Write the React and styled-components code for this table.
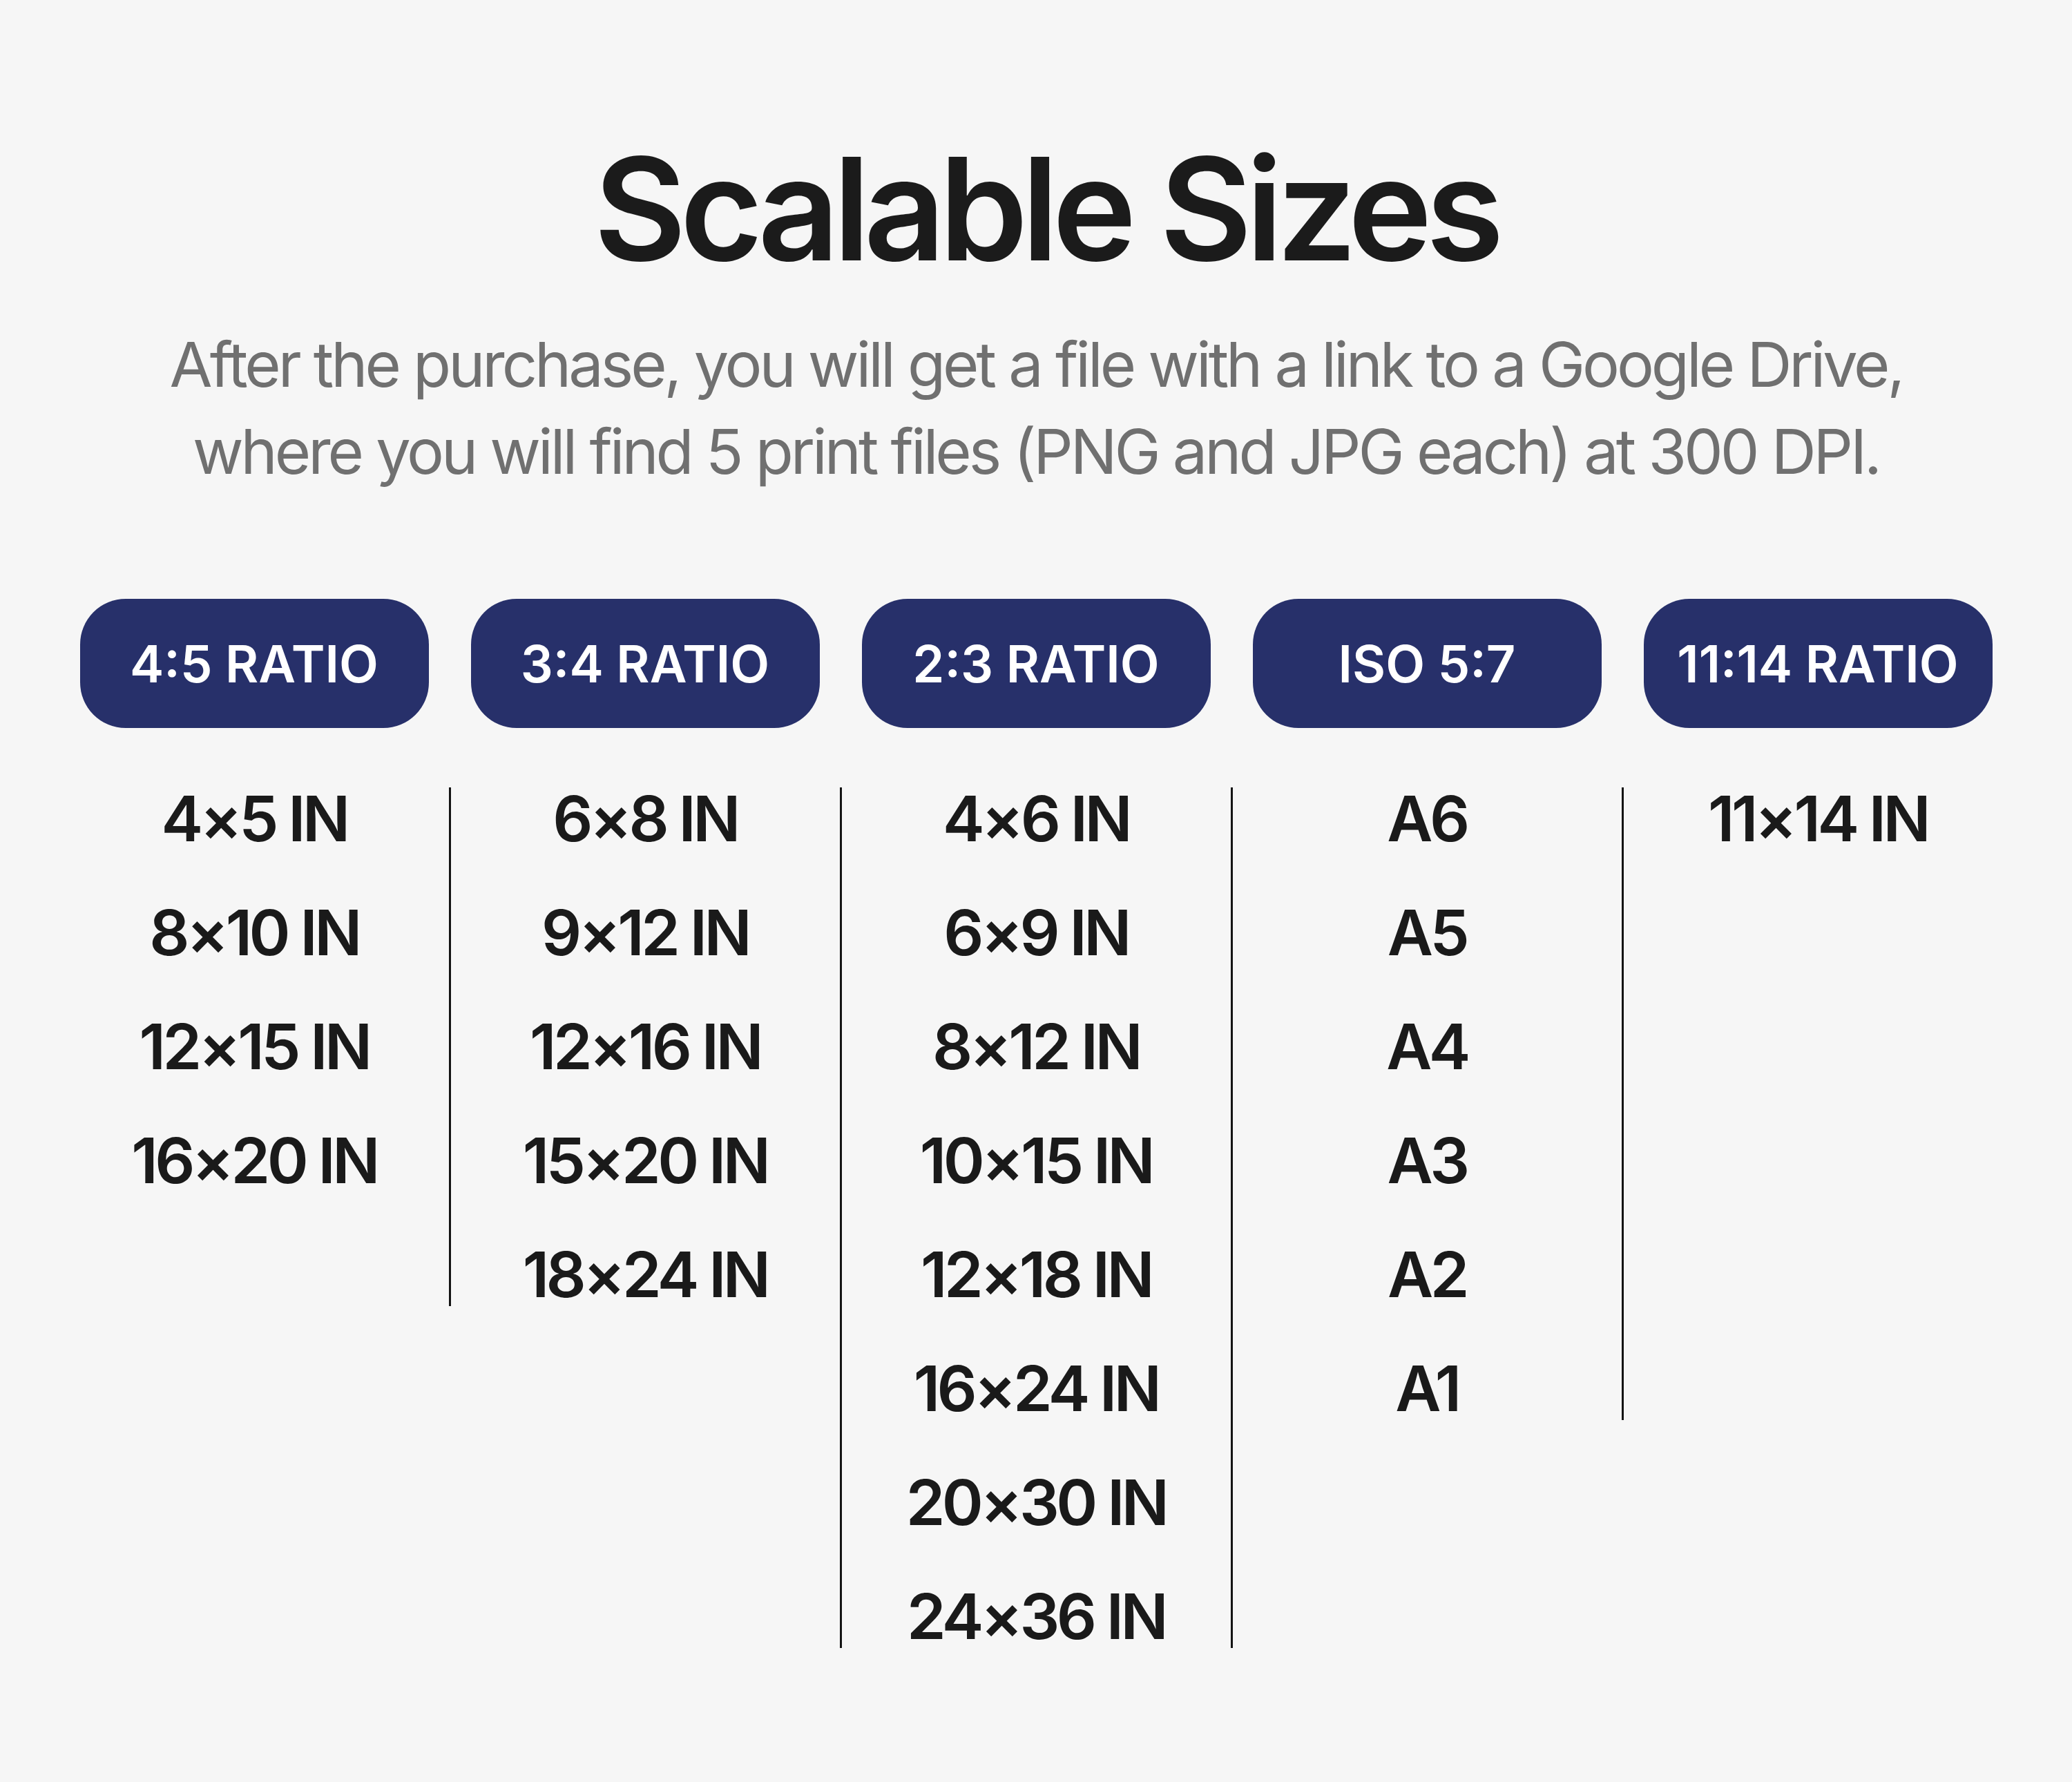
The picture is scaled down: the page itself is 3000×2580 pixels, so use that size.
import styled, { createGlobalStyle } from "styled-components";

const GlobalStyle = createGlobalStyle`
    html, body {
        margin: 0;
        padding: 0;
        background: #f6f6f6;
    }
    body {
        font-family: Inter, "Noto Sans", sans-serif;
        -webkit-font-smoothing: antialiased;
    }
`;

const Page = styled.main`
    width: 3000px;
    min-height: 2580px;
    box-sizing: border-box;
    padding-top: 199px;
    display: flex;
    flex-direction: column;
    align-items: center;
`;

const Title = styled.h1`
    margin: 0 0 0 28px;
    font-size: 206px;
    line-height: 206px;
    font-weight: 600;
    letter-spacing: -0.045em;
    color: #1b1b1b;
`;

const Subtitle = styled.p`
    margin: 60px 0 0;
    font-size: 90px;
    line-height: 126px;
    font-weight: 400;
    letter-spacing: -0.045em;
    color: #707070;
    text-align: center;
`;

const Grid = styled.section`
    margin-top: 150px;
    display: grid;
    grid-template-columns: repeat(5, 566px);
`;

const Column = styled.div`
    display: flex;
    flex-direction: column;
    align-items: stretch;
    padding: 0 30.5px;
`;

const Pill = styled.div`
    height: 187px;
    border-radius: 66px;
    background: #27306a;
    color: #ffffff;
    display: flex;
    align-items: center;
    justify-content: center;
    font-size: 74px;
    font-weight: 600;
    letter-spacing: 0;
`;

const List = styled.ul`
    list-style: none;
    margin: 86px -32px 0;
    padding: 0;
    display: flex;
    flex-direction: column;
    gap: 74px;
    border-left: 3px solid ${({ $left }) => ($left ? "#141414" : "transparent")};
    border-right: 3px solid ${({ $right }) => ($right ? "#141414" : "transparent")};
`;

const Size = styled.li`
    font-size: 91px;
    line-height: 91px;
    font-weight: 600;
    letter-spacing: -0.05em;
    color: #1a1a1a;
    text-align: center;
`;

const groups = [
    { label: "4:5 RATIO", sizes: ["4×5 IN", "8×10 IN", "12×15 IN", "16×20 IN"] },
    { label: "3:4 RATIO", sizes: ["6×8 IN", "9×12 IN", "12×16 IN", "15×20 IN", "18×24 IN"] },
    { label: "2:3 RATIO", sizes: ["4×6 IN", "6×9 IN", "8×12 IN", "10×15 IN", "12×18 IN", "16×24 IN", "20×30 IN", "24×36 IN"] },
    { label: "ISO 5:7", sizes: ["A6", "A5", "A4", "A3", "A2", "A1"] },
    { label: "11:14 RATIO", sizes: ["11×14 IN"] },
];

const App = () => {
    return (
        <>
            <GlobalStyle />
            <Page>
                <Title>Scalable Sizes</Title>
                <Subtitle>
                    After the purchase, you will get a file with a link to a Google Drive,
                    <br />
                    where you will find 5 print files (PNG and JPG each) at 300 DPI.
                </Subtitle>
                <Grid>
                    {groups.map((g, i) => {
                        const prev = groups[i - 1];
                        const next = groups[i + 1];
                        // the divider follows the taller of two neighbouring lists
                        const left = !!prev && g.sizes.length > prev.sizes.length;
                        const right = !!next && g.sizes.length >= next.sizes.length;
                        return (
                            <Column key={g.label}>
                                <Pill>{g.label}</Pill>
                                <List $left={left} $right={right}>
                                    {g.sizes.map((s) => (
                                        <Size key={s}>{s}</Size>
                                    ))}
                                </List>
                            </Column>
                        );
                    })}
                </Grid>
            </Page>
        </>
    );
};

export default App;
